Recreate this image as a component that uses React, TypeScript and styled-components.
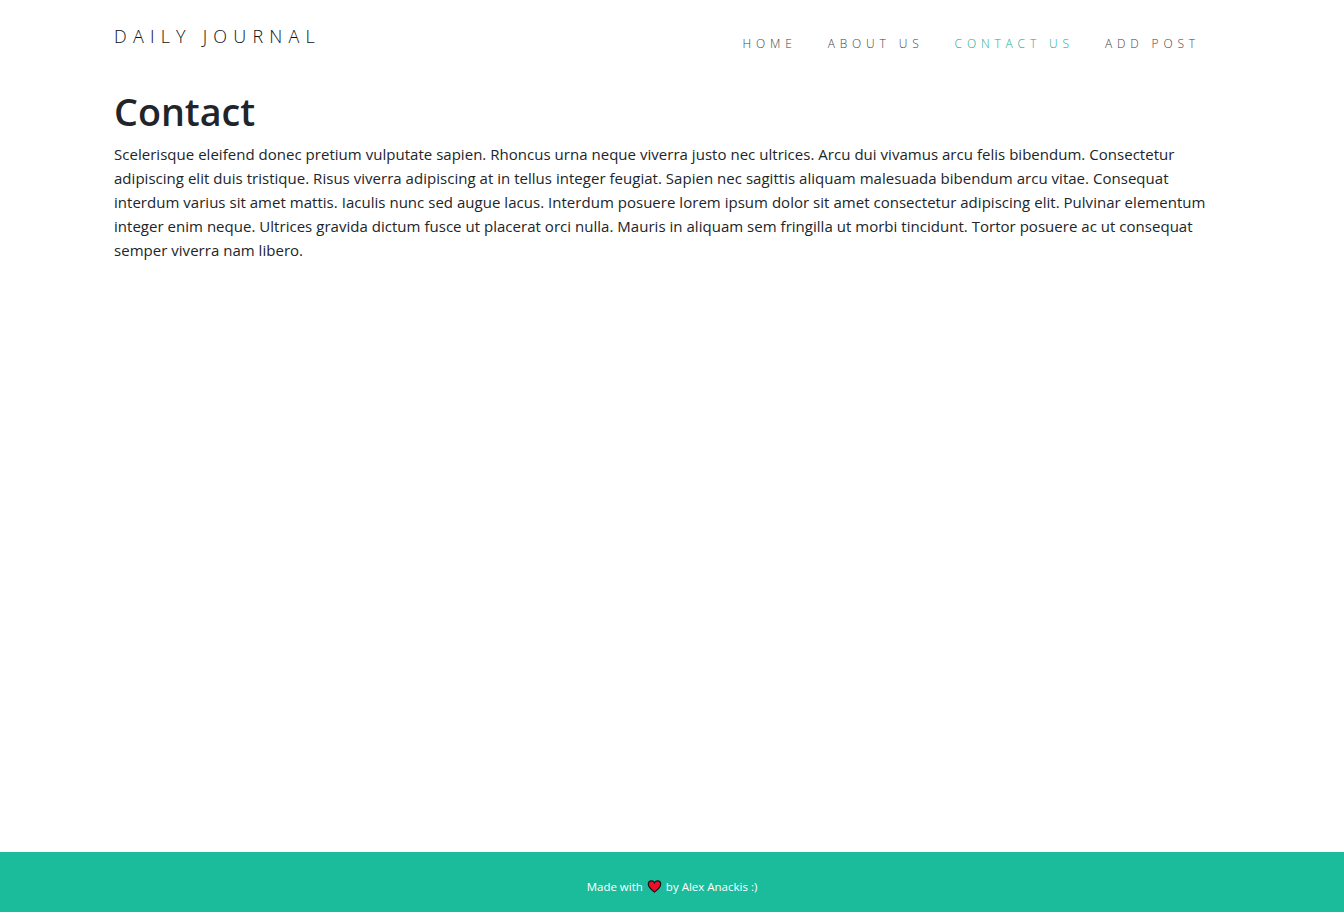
import React from 'react';
import styled, {createGlobalStyle} from 'styled-components';

const GlobalStyle = createGlobalStyle`
    html, body {
        margin: 0;
        padding: 0;
        height: 100%;
        background: #fff;
        font-family: 'Open Sans', 'Noto Sans', sans-serif;
    }
    #root {
        min-height: 100%;
    }
`;

const Page = styled.div`
    display: flex;
    flex-direction: column;
    height: 912px;
`;

const Main = styled.div`
    flex: 1;
    width: 1116px;
    margin: 0 auto;
`;

const Header = styled.header`
    display: flex;
    justify-content: space-between;
    align-items: flex-start;
    height: 91px;
`;

const Brand = styled.a`
    margin-top: 24px;
    font-size: 18px;
    line-height: 24px;
    font-weight: 300;
    letter-spacing: 6.2px;
    color: #111;
    white-space: pre;
`;

const Nav = styled.nav`
    display: flex;
    gap: 31px;
    margin-top: 35px;
    margin-right: 30px;
`;

const NavLink = styled.a<{$active?: boolean}>`
    font-size: 12px;
    line-height: 17px;
    font-weight: 300;
    letter-spacing: 4.85px;
    color: ${(p) => (p.$active ? '#12ad8e' : '#444')};
    white-space: pre;
`;

const Title = styled.h1`
    margin: 0 0 9px;
    font-size: 37.7px;
    line-height: 42px;
    font-weight: 600;
    color: #212529;
`;

const Body = styled.p`
    margin: 0;
    font-size: 15px;
    line-height: 24px;
    letter-spacing: 0.027px;
    color: #212529;
`;

const Footer = styled.footer`
    display: flex;
    justify-content: center;
    align-items: center;
    gap: 4px;
    height: 60px;
    padding-top: 8px;
    box-sizing: border-box;
    background: #1abc9c;
    color: #fff;
    font-size: 11.5px;
`;

export default function App(): JSX.Element {
    return (
        <Page>
            <GlobalStyle />
            <Main>
                <Header>
                    <Brand>DAILY JOURNAL</Brand>
                    <Nav>
                        <NavLink>HOME</NavLink>
                        <NavLink>ABOUT US</NavLink>
                        <NavLink $active>CONTACT US</NavLink>
                        <NavLink>ADD POST</NavLink>
                    </Nav>
                </Header>
                <Title>Contact</Title>
                <Body>
                    Scelerisque eleifend donec pretium vulputate sapien. Rhoncus urna neque viverra justo nec ultrices. Arcu dui vivamus arcu felis bibendum. Consectetur adipiscing elit duis tristique. Risus viverra adipiscing at in tellus integer feugiat. Sapien nec sagittis aliquam malesuada bibendum arcu vitae. Consequat interdum varius sit amet mattis. Iaculis nunc sed augue lacus. Interdum posuere lorem ipsum dolor sit amet consectetur adipiscing elit. Pulvinar elementum integer enim neque. Ultrices gravida dictum fusce ut placerat orci nulla. Mauris in aliquam sem fringilla ut morbi tincidunt. Tortor posuere ac ut consequat semper viverra nam libero.
                </Body>
            </Main>
            <Footer>
                <span>Made with</span>
                <svg width="15" height="13" viewBox="0 0 24 22">
                    <path d="M12 20.5 C5 15 1.5 11.5 1.5 7 C1.5 3.8 4 1.5 7 1.5 C9 1.5 11 2.6 12 4.5 C13 2.6 15 1.5 17 1.5 C20 1.5 22.5 3.8 22.5 7 C22.5 11.5 19 15 12 20.5 Z" fill="#e8112d" stroke="#111" strokeWidth="2" />
                </svg>
                <span>by Alex Anackis :)</span>
            </Footer>
        </Page>
    );
}
